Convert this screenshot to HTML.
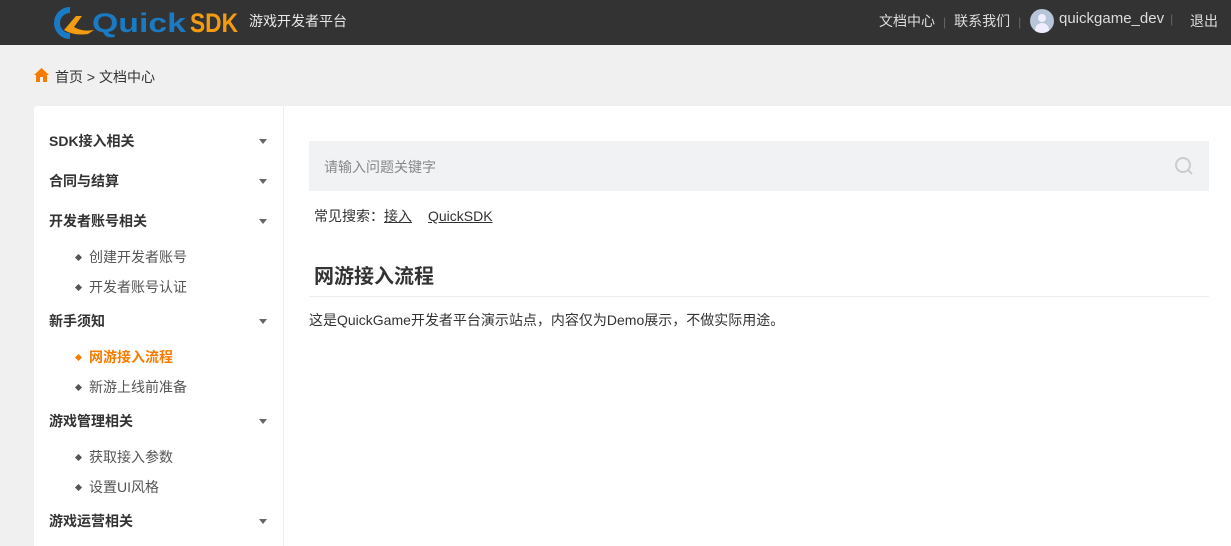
<!DOCTYPE html>
<html><head><meta charset="utf-8"><style>
*{margin:0;padding:0;box-sizing:border-box}
body{width:1231px;height:546px;overflow:hidden;background:#f0f0f0;font-family:"Liberation Sans","Noto Sans CJK SC",sans-serif;color:#333;position:relative}
.hd{position:absolute;left:0;top:0;width:1231px;height:45px;background:#333}
.abs{position:absolute;white-space:nowrap}
.card{position:absolute;left:34px;top:106px;width:1197px;height:440px;background:#fff;border-radius:4px 0 0 0}
.side{position:absolute;left:34px;top:106px;width:250px;height:440px;border-right:1px solid #eee}
.h{position:absolute;left:49px;font-size:14px;font-weight:bold;color:#333;line-height:16px}
.tri{position:absolute;left:259px;width:0;height:0;border-left:4px solid transparent;border-right:4px solid transparent;border-top:5px solid #666}
.s{position:absolute;left:76px;font-size:14px;color:#555;line-height:16px}
.s:before{content:"";display:inline-block;width:5px;height:5px;background:#555;transform:rotate(45deg);margin:0 8px 2px 0;vertical-align:middle}
.s.on{color:#f57c00;font-weight:bold}.s.on:before{background:#f57c00}
.sep{color:#666;font-size:12px;margin:0 8px}
</style></head><body>
<div class="hd"></div>
<svg class="abs" style="left:48px;top:2px" width="200" height="40" viewBox="0 0 200 40">
<path d="M22 8 A13 13 0 1 0 22 34" fill="none" stroke="#1a7bc4" stroke-width="6"/>
<path d="M16 28 L28 14 L34 14 L26 25 Q34 30 46 28 L40 32 Q26 34 16 28Z" fill="#f39c12"/>
<text x="44" y="30" font-family="Liberation Sans" font-weight="bold" font-size="27" fill="#1a7bc4" textLength="94" lengthAdjust="spacingAndGlyphs">Quick</text>
<text x="142" y="30" font-family="Liberation Sans" font-weight="bold" font-size="27" fill="#f39c12" textLength="48" lengthAdjust="spacingAndGlyphs">SDK</text>
</svg>
<div class="abs" style="left:249px;top:11px;font-size:14px;color:#e8e8e8">游戏开发者平台</div>
<div class="abs" style="left:879px;top:11px;font-size:14px;color:#ddd">文档中心<span class="sep">|</span>联系我们<span class="sep">|</span></div>
<div class="abs" style="left:1030px;top:9px;width:24px;height:24px;border-radius:50%;background:#b8c4d8;overflow:hidden"><div style="position:absolute;left:8px;top:5px;width:8px;height:8px;border-radius:50%;background:#eef"></div><div style="position:absolute;left:5px;top:14px;width:14px;height:10px;border-radius:7px 7px 0 0;background:#eef"></div></div>
<div class="abs" style="left:1059px;top:10px;font-size:15px;color:#ddd">quickgame_dev<span class="sep" style="margin-left:6px">|</span></div>
<div class="abs" style="left:1190px;top:11px;font-size:14px;color:#ddd">退出</div>
<svg class="abs" style="left:34px;top:68px" width="15" height="14" viewBox="0 0 15 14"><path d="M7.5 0 L15 7 L13 7 L13 14 L9 14 L9 9 L6 9 L6 14 L2 14 L2 7 L0 7Z" fill="#f57c00"/></svg>
<div class="abs" style="left:55px;top:67px;font-size:14px;color:#333">首页 &gt; 文档中心</div>
<div class="card"></div><div class="side"></div>
<div class="h" style="top:133px">SDK接入相关</div><div class="tri" style="top:139px"></div>
<div class="h" style="top:173px">合同与结算</div><div class="tri" style="top:179px"></div>
<div class="h" style="top:213px">开发者账号相关</div><div class="tri" style="top:219px"></div>
<div class="s" style="top:249px">创建开发者账号</div>
<div class="s" style="top:279px">开发者账号认证</div>
<div class="h" style="top:313px">新手须知</div><div class="tri" style="top:319px"></div>
<div class="s on" style="top:349px">网游接入流程</div>
<div class="s" style="top:379px">新游上线前准备</div>
<div class="h" style="top:413px">游戏管理相关</div><div class="tri" style="top:419px"></div>
<div class="s" style="top:449px">获取接入参数</div>
<div class="s" style="top:479px">设置UI风格</div>
<div class="h" style="top:513px">游戏运营相关</div><div class="tri" style="top:519px"></div>
<div class="abs" style="left:309px;top:141px;width:900px;height:50px;background:#f1f2f4"></div>
<div class="abs" style="left:324px;top:157px;font-size:14px;color:#888">请输入问题关键字</div>
<svg class="abs" style="left:1174px;top:156px" width="20" height="20" viewBox="0 0 20 20"><circle cx="9" cy="9" r="7" fill="none" stroke="#ccc" stroke-width="2"/><path d="M14 14 L18 18" stroke="#ccc" stroke-width="2"/></svg>
<div class="abs" style="left:314px;top:206px;font-size:14px;color:#333">常见搜索：<u>接入</u><span style="display:inline-block;width:16px"></span><u>QuickSDK</u></div>
<div class="abs" style="left:314px;top:260px;font-size:20px;font-weight:bold;color:#333">网游接入流程</div>
<div class="abs" style="left:309px;top:296px;width:900px;height:1px;background:#eee"></div>
<div class="abs" style="left:309px;top:310px;font-size:14px;color:#333">这是QuickGame开发者平台演示站点，内容仅为Demo展示，不做实际用途。</div>
</body></html>
